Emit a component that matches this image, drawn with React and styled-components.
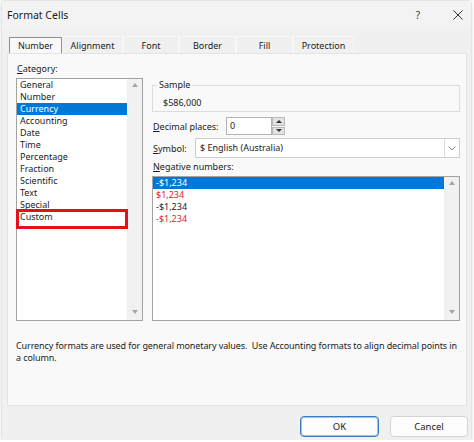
import React from 'react';
import styled, { createGlobalStyle } from 'styled-components';

const Global = createGlobalStyle`
  html, body { margin: 0; padding: 0; background: #ffffff; }
  body {
    font-family: "Noto Sans", "Open Sans", sans-serif;
    font-size: 9px;
    color: #1b1b1b;
  }
  * { box-sizing: border-box; }
`;

const Dialog = styled.div`
  margin: 1px 0 0 2px;
  width: 469px;
  height: 439px;
  background: #f0f0f0;
  box-shadow: 0 0 3px rgba(0, 0, 0, 0.28);
  display: flex;
  flex-direction: column;
`;

const TitleBar = styled.div`
  height: 28px;
  display: flex;
  align-items: center;
  padding: 0 3px 0 5px;
  background: #f3f3f3;
  font-size: 10.5px;
`;

const TitleText = styled.span`
  flex: 1;
`;

const TitleBtn = styled.span`
  width: ${p => p.$w}px;
  margin-left: ${p => p.$ml || 0}px;
  display: flex;
  justify-content: center;
  align-items: center;
  color: #333;
  font-size: 10px;
`;

const TabRow = styled.div`
  display: flex;
  height: 17px;
  margin-top: 7px;
  padding-left: 7px;
`;

const Tab = styled.div`
  width: ${p => p.$w}px;
  display: flex;
  align-items: center;
  justify-content: center;
  font-size: 9px;
  background: ${p => (p.$active ? '#f9f9f9' : '#f0f0f0')};
  border: 1px solid ${p => (p.$active ? '#8f8f8f' : '#f7f7f7')};
  border-bottom: none;
  margin-top: ${p => (p.$active ? 1 : 0)}px;
`;

const Panel = styled.div`
  margin: 0 4px 0 5px;
  height: 353px;
  background: #f9f9f9;
  border: 1px solid #e4e4e4;
  padding: 8px 6px 0 8px;
  display: flex;
  flex-direction: column;
`;

const TopArea = styled.div`
  display: flex;
  gap: 9px;
`;

const LeftCol = styled.div`
  width: 127px;
  display: flex;
  flex-direction: column;
`;

const Label = styled.div`
  height: 14px;
  line-height: 14px;
  margin-left: ${p => p.$ml || 0}px;
  margin-top: ${p => p.$mt || 0}px;
  white-space: nowrap;
`;

const Acc = styled.span`
  text-decoration: underline;
  text-underline-offset: 1px;
`;

const ListBox = styled.div`
  height: ${p => p.$h}px;
  margin-top: 2px;
  border: 1px solid #a3a3a3;
  background: #ffffff;
  display: flex;
  flex: ${p => (p.$grow ? 1 : 'none')};
`;

const Items = styled.div`
  flex: 1;
`;

const Item = styled.div`
  position: relative;
  height: 12px;
  line-height: 12px;
  padding-left: 3px;
  white-space: nowrap;
  background: ${p => (p.$sel ? '#0078d7' : 'transparent')};
  color: ${p => (p.$sel ? '#ffffff' : p.$red ? '#e0202a' : '#1b1b1b')};
`;

const Highlight = styled.div`
  position: absolute;
  left: -1px;
  right: -1px;
  top: -2px;
  bottom: -6px;
  border: 3px solid #e3101c;
  pointer-events: none;
`;

const ScrollBar = styled.div`
  width: 15px;
  background: #f1f1f1;
  display: flex;
  flex-direction: column;
  justify-content: space-between;
  align-items: center;
  padding: 4px 0 6px;
`;

const Arrow = styled.div`
  width: 0;
  height: 0;
  border-left: 3.5px solid transparent;
  border-right: 3.5px solid transparent;
  ${p =>
    p.$down
      ? 'border-top: 4px solid #a5a5a5;'
      : 'border-bottom: 4px solid #a5a5a5;'}
`;

const RightCol = styled.div`
  flex: 1;
  display: flex;
  flex-direction: column;
  padding-top: 16px;
`;

const Fieldset = styled.fieldset`
  margin: 0;
  padding: 4px 10px 1px;
  border: 1px solid #dcdcdc;
  min-width: 0;
`;

const Legend = styled.legend`
  padding: 0 2px;
  margin-left: -6px;
  line-height: 14px;
  height: 14px;
`;

const SampleValue = styled.div`
  height: 14px;
  line-height: 14px;
`;

const FieldRow = styled.div`
  display: flex;
  align-items: center;
  margin-top: ${p => p.$mt}px;
  height: ${p => p.$h}px;
  padding-left: 1px;
`;

const RowLabel = styled.div`
  width: ${p => p.$w}px;
  white-space: nowrap;
`;

const NumInput = styled.div`
  width: 46px;
  height: 18px;
  border: 1px solid #b3b3b3;
  background: #fff;
  padding-left: 3px;
  line-height: 16px;
`;

const Spinner = styled.div`
  width: 13px;
  height: 18px;
  display: flex;
  flex-direction: column;
  gap: 1px;
`;

const SpinBtn = styled.div`
  flex: 1;
  background: #e3e3e3;
  border: 1px solid #b9b9b9;
  display: flex;
  align-items: center;
  justify-content: center;
`;

const SpinArrow = styled.div`
  width: 0;
  height: 0;
  border-left: 3px solid transparent;
  border-right: 3px solid transparent;
  ${p =>
    p.$down ? 'border-top: 3px solid #333;' : 'border-bottom: 3px solid #333;'}
`;

const Select = styled.div`
  flex: 1;
  height: 20px;
  border: 1px solid #cdcdcd;
  background: #fff;
  display: flex;
  align-items: stretch;
`;

const SelectText = styled.div`
  flex: 1;
  padding-left: 4px;
  line-height: 18px;
`;

const SelectBtn = styled.div`
  width: 15px;
  border-left: 1px solid #dadada;
  display: flex;
  align-items: center;
  justify-content: center;
`;

const Description = styled.p`
  margin: 19px 0 0 0;
  line-height: 12px;
  width: 446px;
  letter-spacing: -0.1px;
  white-space: pre-wrap;
`;

const Footer = styled.div`
  display: flex;
  justify-content: flex-end;
  gap: 11px;
  padding: 10px 3px 0 0;
`;

const Button = styled.div`
  width: ${p => p.$w}px;
  height: 21px;
  border-radius: 4px;
  background: #fdfdfd;
  border: 1px solid ${p => (p.$primary ? '#3a7cc1' : '#d3d3d3')};
  box-shadow: ${p => (p.$primary ? 'inset 0 0 0 1px #9fc3e6' : 'none')};
  display: flex;
  align-items: center;
  justify-content: center;
  font-size: 9.5px;
`;

const categories = [
  'General', 'Number', 'Currency', 'Accounting', 'Date', 'Time',
  'Percentage', 'Fraction', 'Scientific', 'Text', 'Special', 'Custom',
];

const negatives = [
  { t: '-$1,234', sel: true },
  { t: '$1,234', red: true },
  { t: '-$1,234' },
  { t: '-$1,234', red: true },
];

const tabs = [
  ['Number', 53], ['Alignment', 61], ['Font', 56],
  ['Border', 57], ['Fill', 57], ['Protection', 61],
];

export default function App() {
  return (
    <>
      <Global />
      <Dialog>
        <TitleBar>
          <TitleText>Format Cells</TitleText>
          <TitleBtn $w={20}>?</TitleBtn>
          <TitleBtn $w={20} $ml={20}>
            <svg width="10" height="10" viewBox="0 0 10 10">
              <path d="M0.5 0.5 L9.5 9.5 M9.5 0.5 L0.5 9.5" stroke="#333" strokeWidth="1" fill="none" />
            </svg>
          </TitleBtn>
        </TitleBar>

        <TabRow>
          {tabs.map(([t, w], i) => (
            <Tab key={t} $w={w} $active={i === 0}>{t}</Tab>
          ))}
        </TabRow>

        <Panel>
          <TopArea>
            <LeftCol>
              <Label $ml={1}><Acc>C</Acc>ategory:</Label>
              <ListBox $h={243}>
                <Items>
                  {categories.map(c => (
                    <Item key={c} $sel={c === 'Currency'}>
                      {c}
                      {c === 'Custom' && <Highlight />}
                    </Item>
                  ))}
                </Items>
                <ScrollBar>
                  <Arrow />
                  <Arrow $down />
                </ScrollBar>
              </ListBox>
            </LeftCol>

            <RightCol>
              <Fieldset>
                <Legend>Sample</Legend>
                <SampleValue>$586,000</SampleValue>
              </Fieldset>

              <FieldRow $mt={5} $h={18}>
                <RowLabel $w={73}><Acc>D</Acc>ecimal places:</RowLabel>
                <NumInput>0</NumInput>
                <Spinner>
                  <SpinBtn><SpinArrow /></SpinBtn>
                  <SpinBtn><SpinArrow $down /></SpinBtn>
                </Spinner>
              </FieldRow>

              <FieldRow $mt={3} $h={20}>
                <RowLabel $w={42}><Acc>S</Acc>ymbol:</RowLabel>
                <Select>
                  <SelectText>$ English (Australia)</SelectText>
                  <SelectBtn>
                    <svg width="8" height="5" viewBox="0 0 8 5">
                      <path d="M0.5 0.5 L4 4 L7.5 0.5" stroke="#777" strokeWidth="0.9" fill="none" />
                    </svg>
                  </SelectBtn>
                </Select>
              </FieldRow>

              <Label $ml={1} $mt={2}><Acc>N</Acc>egative numbers:</Label>
              <ListBox $grow>
                <Items>
                  {negatives.map((n, i) => (
                    <Item key={i} $sel={n.sel} $red={n.red}>{n.t}</Item>
                  ))}
                </Items>
                <ScrollBar>
                  <Arrow />
                  <Arrow $down />
                </ScrollBar>
              </ListBox>
            </RightCol>
          </TopArea>

          <Description>
            {'Currency formats are used for general monetary values.  Use Accounting formats to align decimal points in a column.'}
          </Description>
        </Panel>

        <Footer>
          <Button $w={79} $primary>OK</Button>
          <Button $w={78}>Cancel</Button>
        </Footer>
      </Dialog>
    </>
  );
}
